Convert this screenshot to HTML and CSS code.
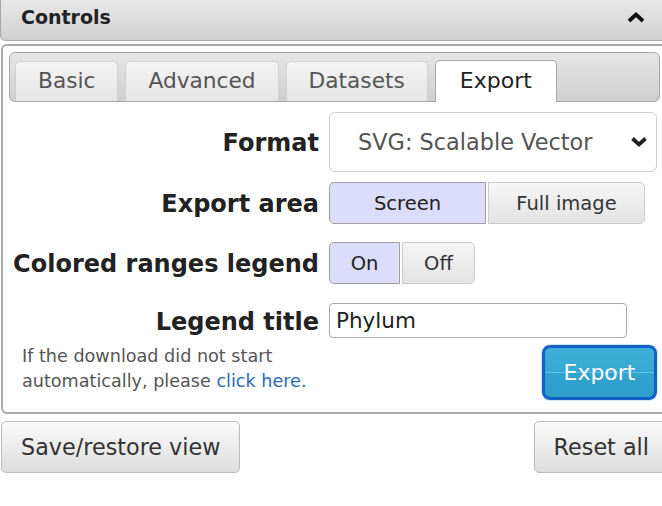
FILE: index.html
```html
<!DOCTYPE html>
<html lang="en">
<head>
  <meta charset="UTF-8" />
  <title>Controls</title>
  <link rel="stylesheet" href="styles.css">
</head>
<body>
  <!-- Header -->
  <div class="header">
    <span class="header-title">Controls</span>
    <svg class="header-toggle" width="18" height="12" viewBox="0 0 18 12">
      <path d="M2 10 L9 3.5 L16 10" fill="none" stroke="#111" stroke-width="3.8" stroke-linejoin="miter"/>
    </svg>
  </div>

  <div class="controls">
    <div class="panel">
      <!-- Tabs -->
      <ul class="tabs">
        <li class="tab">Basic</li>
        <li class="tab">Advanced</li>
        <li class="tab">Datasets</li>
        <li class="tab active">Export</li>
      </ul>

      <!-- Export form -->
      <div class="form">
        <div class="row row-format">
          <label class="label">Format</label>
          <div class="select">
            <span>SVG: Scalable Vector</span>
            <svg width="18" height="12" viewBox="0 0 18 12">
              <path d="M2.5 2.5 L9 8.5 L15.5 2.5" fill="none" stroke="#222" stroke-width="3.8"/>
            </svg>
          </div>
        </div>

        <div class="row row-area">
          <label class="label">Export area</label>
          <div class="toggle">
            <button class="seg seg-wide selected">Screen</button>
            <button class="seg seg-wide">Full image</button>
          </div>
        </div>

        <div class="row row-legend">
          <label class="label">Colored ranges legend</label>
          <div class="toggle">
            <button class="seg seg-on selected">On</button>
            <button class="seg seg-off">Off</button>
          </div>
        </div>

        <div class="row row-title">
          <label class="label">Legend title</label>
          <input class="text-input" type="text" value="Phylum">
        </div>

        <div class="note-row">
          <p class="note">If the download did not start<br>automatically, please <a href="#">click here.</a></p>
          <button class="export-btn">Export</button>
        </div>
      </div>
    </div>

    <div class="bottom-row">
      <button class="btn">Save/restore view</button>
      <button class="btn">Reset all</button>
    </div>
  </div>
</body>
</html>
```

FILE: styles.css
```css
* {
  box-sizing: border-box;
}

html, body {
  overflow: hidden;
}

body {
  margin: 0;
  font-family: "DejaVu Sans", Verdana, sans-serif;
  background-color: #fff;
  color: #222;
  width: 670px;
}

/* Header */

.header {
  height: 41px;
  display: flex;
  align-items: center;
  justify-content: space-between;
  padding: 0 22px 6px 20px;
  background: linear-gradient(#e8e8e8, #d0d0d0);
  border: 1px solid #a8a8a8;
  border-top: none;
  border-radius: 0 0 5px 5px;
  width: 670px;
}

.header-title {
  font-size: 19px;
  font-weight: bold;
  color: #222;
}

.header-toggle {
  margin-right: 2px;
}

.controls {
  width: 668px;
  margin-left: 1px;
}

/* Panel */

.panel {
  margin-top: 3px;
  border: 2px solid #aaa;
  border-radius: 6px;
  padding: 6px 0 12px 6px;
}

.tabs {
  list-style: none;
  margin: 0;
  width: 651px;
  height: 50px;
  display: flex;
  gap: 7px;
  align-items: flex-end;
  padding: 0 0 0 5px;
  background: linear-gradient(#e6e6e6, #cfcfcf);
  border: 1px solid #a6a6a6;
  border-radius: 6px;
}

.tab {
  height: 40px;
  padding: 0 22px;
  font-size: 21.7px;
  line-height: 38px;
  color: #555;
  background: linear-gradient(#f3f3f3, #e6e6e6);
  border: 1px solid #d0d0d0;
  border-bottom: none;
  border-radius: 5px 5px 0 0;
}

.tab.active {
  height: 42px;
  margin-bottom: -1px;
  padding: 0 24px;
  line-height: 40px;
  font-size: 22px;
  color: #222;
  background: #fff;
  border-color: #aaa;
}

/* Form */

.form {
  display: flex;
  flex-direction: column;
}

.row {
  display: grid;
  grid-template-columns: 310px 1fr;
  column-gap: 10px;
  align-items: center;
}

.label {
  text-align: right;
  font-size: 24px;
  font-weight: bold;
  color: #222;
  white-space: nowrap;
  padding-top: 2px;
}

.row-format {
  margin-top: 10px;
  height: 60px;
}

.row-area {
  margin-top: 10px;
  height: 42px;
}

.row-legend {
  margin-top: 18px;
  height: 42px;
}

.row-title {
  margin-top: 19px;
  height: 35px;
}

.select {
  width: 328px;
  height: 60px;
  display: flex;
  align-items: center;
  justify-content: space-between;
  padding: 0 8px 0 28px;
  font-size: 22.4px;
  color: #555;
  background: #fff;
  border: 1px solid #ccc;
  border-radius: 6px;
}

.toggle {
  display: flex;
  gap: 2px;
}

.seg {
  height: 42px;
  font-family: inherit;
  font-size: 19.5px;
  color: #333;
  background: linear-gradient(#f6f6f6, #e3e3e3);
  border: 1px solid #ccc;
  padding: 0;
}

.seg:first-child {
  border-radius: 5px 0 0 5px;
}

.seg:last-child {
  border-radius: 0 5px 5px 0;
}

.seg.selected {
  background: #dcdcfb;
  border-color: #a0a0a0;
  color: #222;
}

.seg-wide {
  width: 157px;
}

.seg-on {
  width: 71px;
}

.seg-off {
  width: 73px;
}

.text-input {
  width: 298px;
  height: 35px;
  padding: 0 6px;
  font-family: inherit;
  font-size: 21.5px;
  color: #222;
  border: 1px solid #a8a8a8;
  border-radius: 4px;
}

.note-row {
  margin-top: 8px;
  width: 650px;
  display: flex;
  justify-content: space-between;
  align-items: flex-start;
  padding-left: 13px;
}

.note {
  margin: -2px 0 0;
  font-size: 17.6px;
  line-height: 25px;
  color: #555;
}

.note a {
  color: #2a6bb3;
  text-decoration: none;
}

.export-btn {
  width: 115px;
  height: 55px;
  margin-right: 2px;
  margin-top: -1px;
  font-family: inherit;
  font-size: 22px;
  color: #fff;
  background: linear-gradient(#3dafd9 0%, #36a8d3 48%, #5fc3e3 50%, #32a3cf 52%, #2e9ecb 100%);
  border: 3px solid #1560c8;
  border-radius: 8px;
  box-shadow: 0 0 0 1px #d5e6f5;
}

/* Bottom buttons */

.bottom-row {
  margin-top: 7px;
  display: flex;
  justify-content: space-between;
}

.btn {
  height: 52px;
  padding: 0 19px;
  font-family: inherit;
  font-size: 22.3px;
  color: #333;
  background: linear-gradient(#fafafa, #dddddd);
  border: 1px solid #bdbdbd;
  border-radius: 5px;
}
```
